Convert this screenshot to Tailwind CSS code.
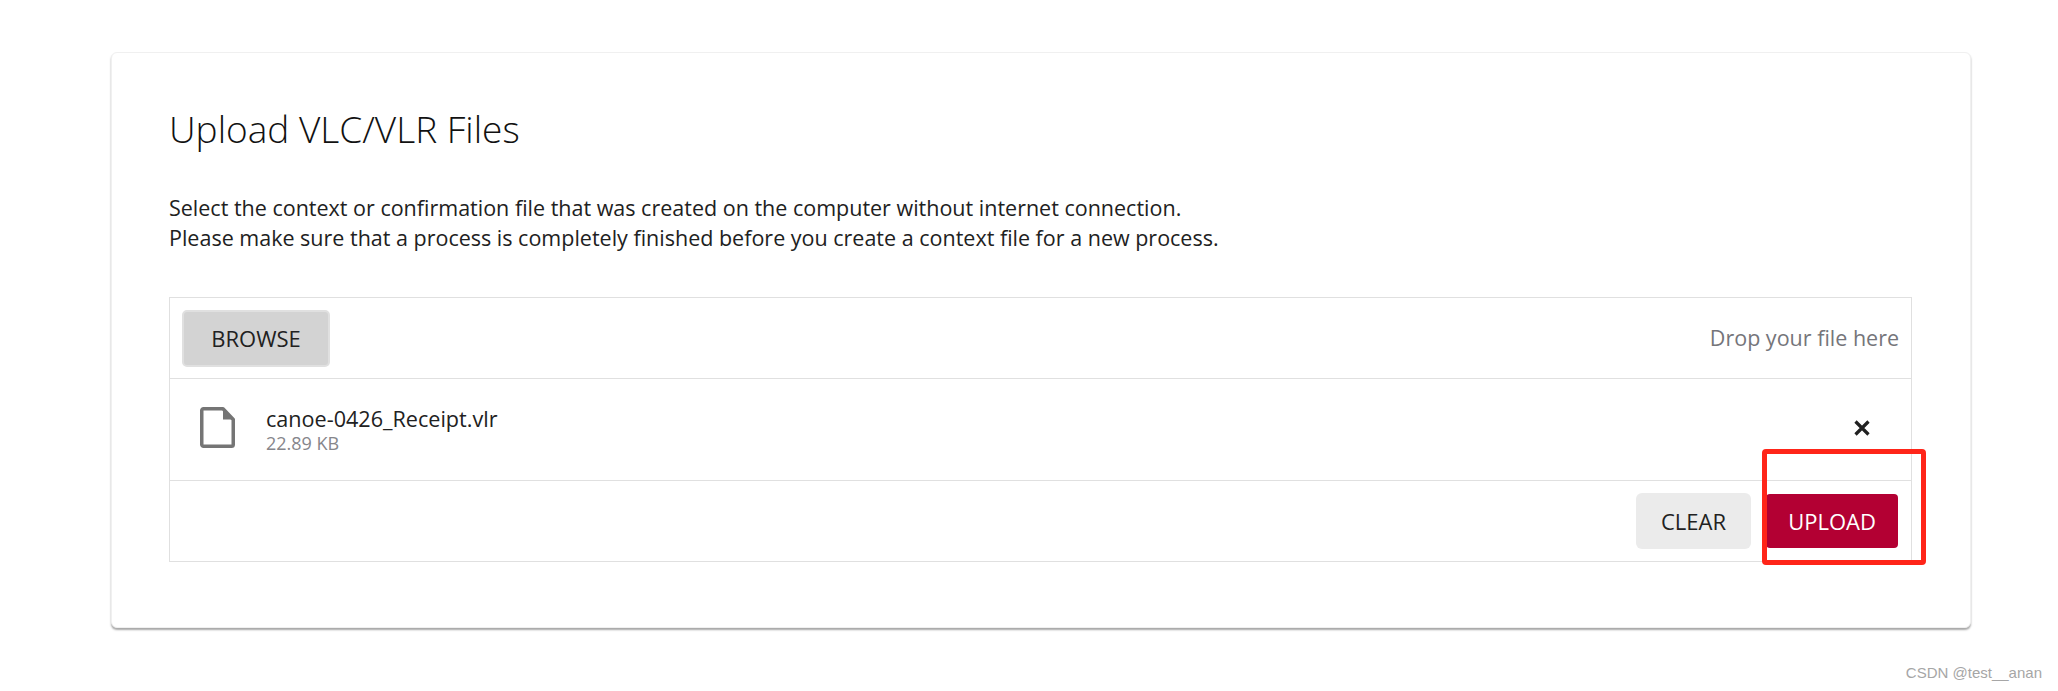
<!DOCTYPE html>
<html lang="en">
<head>
    <meta charset="UTF-8">
    <title>Upload VLC/VLR Files</title>
    <script src="https://cdn.jsdelivr.net/npm/@tailwindcss/browser@4"></script>
</head>
<body class="relative bg-white h-[691px] overflow-hidden pt-[52px] pl-[111px] font-['Open_Sans',sans-serif] text-[#212121]">
    <div class="w-[1860px] h-[576px] bg-white rounded-[6px] border border-[#f0f0f0] shadow-[0_2px_2px_rgba(0,0,0,0.35)] pt-[51px] px-[57px]">
        <h1 class="text-[37px] leading-[50px] font-light text-[#111111]">Upload VLC/VLR Files</h1>

        <div class="mt-[39px] text-[21.5px] leading-[30px]">
            <p>Select the context or confirmation file that was created on the computer without internet connection.</p>
            <p>Please make sure that a process is completely finished before you create a context file for a new process.</p>
        </div>

        <div class="mt-[44px] w-[1743px] h-[265px] border border-[#e0e0e0] flex flex-col">
            <div class="h-[81px] flex items-center justify-between pl-[12px] pr-[12px] border-b border-[#e0e0e0]">
                <button class="w-[148px] h-[57px] bg-[#d3d3d3] border-2 border-[#e0e0e0] rounded-[5px] text-[22px]">BROWSE</button>
                <span class="text-[21.5px] text-[#75757a]">Drop your file here</span>
            </div>

            <div class="h-[102px] flex items-center border-b border-[#e0e0e0] pl-[30px] pr-[41px]">
                <svg class="w-[35px] h-[41px] mb-[5px]" viewBox="0 0 35 41">
                    <path d="M1.75 3.5a1.75 1.75 0 0 1 1.75-1.75H23L33.25 12.5v25a1.75 1.75 0 0 1-1.75 1.75h-28a1.75 1.75 0 0 1-1.75-1.75z" fill="#fff" stroke="#757575" stroke-width="3.5" stroke-linejoin="round"/>
                    <path d="M23 1l11 11.5H23z" fill="#757575"/>
                </svg>
                <div class="ml-[31px] flex-1">
                    <div class="text-[21.6px] leading-[26px] text-[#212121]">canoe-0426_Receipt.vlr</div>
                    <div class="text-[18px] leading-[22px] text-[#86868b]">22.89 KB</div>
                </div>
                <svg class="w-[16px] h-[16px] mb-[4px]" viewBox="0 0 16 16">
                    <path d="M1.5 1.5l13 13M14.5 1.5l-13 13" stroke="#212121" stroke-width="3.2"/>
                </svg>
            </div>

            <div class="flex-1 flex items-center justify-end gap-[15px] pr-[13px]">
                <button class="w-[115px] h-[56px] bg-[#ebebeb] rounded-[6px] text-[22px]">CLEAR</button>
                <button class="w-[132px] h-[54px] bg-[#b30033] rounded-[4px] text-[22px] text-white">UPLOAD</button>
            </div>
        </div>
    </div>

    <!-- annotation drawn over the screenshot -->
    <div class="absolute left-[1762px] top-[449px] w-[164px] h-[116px] border-[5px] border-[#ff2519] rounded-[4px]"></div>
    <div class="absolute right-[16px] top-[663px] font-['Liberation_Sans',sans-serif] text-[15px] leading-[20px] text-[#a6a6a6]">CSDN @test__anan</div>
</body>
</html>
